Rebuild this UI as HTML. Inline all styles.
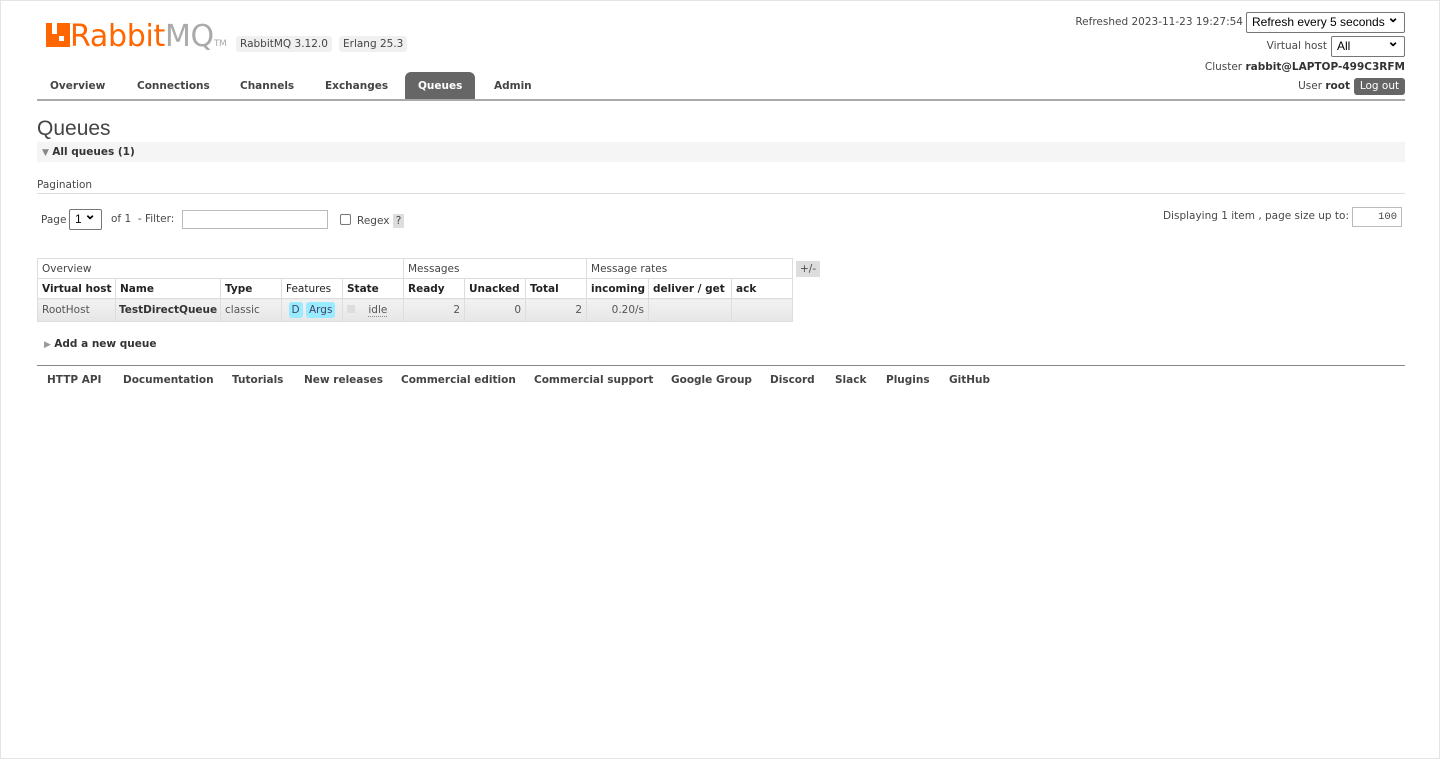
<!DOCTYPE html>
<html><head><meta charset="utf-8"><style>
*{box-sizing:border-box}
body{margin:0;width:1440px;height:759px;background:#fff;font-family:"DejaVu Sans",Verdana,sans-serif;font-size:10.5px;color:#484848;position:relative;overflow:hidden;outline:1px solid #e4e4e4;outline-offset:-1px}
.a{position:absolute;white-space:nowrap}
b{color:#333}
.badge{background:#f0f0f0;border-radius:3px;padding:2px 4px;color:#444}
.nav b{position:absolute;top:80px;color:#444}
.sel{position:absolute;border:1px solid #767676;border-radius:2px;background:#fff;font-size:12px;color:#000;padding:1px 5px;height:21px;line-height:17px;font-family:"Liberation Sans",Arial,sans-serif}
.sel:after{content:"⌄";position:absolute;right:5px;top:-4px;font-size:14px;font-weight:bold}
table{position:absolute;left:37px;top:258px;border-collapse:collapse;font-size:10.5px;table-layout:fixed;width:755px}
td,th{border:1px solid #ddd;padding:0 4px;text-align:left;white-space:nowrap;overflow:hidden}
th{font-weight:bold;color:#222;height:20px}
.h1 th{font-weight:normal;color:#444}
.d td{background:linear-gradient(#f2f2f2,#e6e6e6);height:23px;color:#555}
.r{text-align:right}
.pill{background:#99ebff;border-radius:3px;padding:2px 3px;color:#446}
.foot b{position:absolute;top:374px;color:#444}
</style></head><body>
<div class="a" style="left:46px;top:19px;font-family:'DejaVu Sans',sans-serif;font-size:30px;letter-spacing:-0.3px"><span style="display:inline-block;width:24px;height:24px;background:#f60;vertical-align:-1px;position:relative"><span style="position:absolute;left:6px;top:0;width:5px;height:11px;background:#fff"></span><span style="position:absolute;left:13px;top:13px;width:5px;height:5px;background:#fff"></span></span><span style="color:#f60">Rabbit</span><span style="color:#aaa">MQ</span><span style="font-size:9px;color:#aaa">TM</span></div>
<div class="a" style="left:236px;top:38px"><span class="badge">RabbitMQ 3.12.0</span></div>
<div class="a" style="left:339px;top:38px"><span class="badge">Erlang 25.3</span></div>
<div class="nav">
<b style="left:50px">Overview</b><b style="left:137px">Connections</b><b style="left:240px">Channels</b><b style="left:325px">Exchanges</b>
<div class="a" style="left:405px;top:72px;width:70px;height:28px;background:#666;border-radius:6px 6px 0 0"></div>
<b style="left:418px;color:#fff">Queues</b><b style="left:494px">Admin</b>
</div>
<div class="a" style="left:37px;top:99px;width:1368px;height:2px;background:#aaa"></div>
<div class="a" style="right:197px;top:16px">Refreshed 2023-11-23 19:27:54</div>
<div class="sel" style="left:1246px;top:12px;width:159px">Refresh every 5 seconds</div>
<div class="a" style="right:113px;top:40px">Virtual host</div>
<div class="sel" style="left:1331px;top:36px;width:74px">All</div>
<div class="a" style="right:35px;top:61px">Cluster <b>rabbit@LAPTOP-499C3RFM</b></div>
<div class="a" style="right:90px;top:80px">User <b>root</b></div>
<div class="a" style="left:1354px;top:78px;width:51px;height:17px;background:#666;color:#fff;border-radius:3px;text-align:center;line-height:17px">Log out</div>
<div class="a" style="left:37px;top:117px;font-size:21px;color:#444;font-family:'Liberation Sans',Arial,sans-serif">Queues</div>
<div class="a" style="left:37px;top:142px;width:1368px;height:20px;background:#f5f5f5"></div>
<div class="a" style="left:42px;top:146px"><span style="color:#888;font-size:9px">▼</span> <b>All queues (1)</b></div>
<div class="a" style="left:37px;top:179px">Pagination</div>
<div class="a" style="left:37px;top:193px;width:1368px;height:1px;background:#ddd"></div>
<div class="a" style="left:41px;top:214px">Page</div>
<div class="sel" style="left:69px;top:209px;width:33px;height:21px">1</div>
<div class="a" style="left:111px;top:213px">of 1 &nbsp;- Filter:</div>
<div class="a" style="left:182px;top:210px;width:146px;height:19px;border:1px solid #bbb"></div>
<div class="a" style="left:340px;top:214px;width:11px;height:11px;border:1px solid #777;border-radius:2px"></div>
<div class="a" style="left:357px;top:215px">Regex <span style="background:#ddd;padding:1px 3px">?</span></div>
<div class="a" style="right:91px;top:210px">Displaying 1 item , page size up to:</div>
<div class="a" style="left:1352px;top:207px;width:50px;height:20px;border:1px solid #bbb;text-align:right;padding:3px 4px;font-family:'Liberation Mono',monospace">100</div>
<table>
<colgroup><col style="width:78px"><col style="width:105px"><col style="width:61px"><col style="width:61px"><col style="width:61px"><col style="width:61px"><col style="width:61px"><col style="width:61px"><col style="width:62px"><col style="width:83px"><col style="width:61px"></colgroup>
<tr class="h1"><th colspan="5">Overview</th><th colspan="3">Messages</th><th colspan="3">Message rates</th></tr>
<tr><th>Virtual host</th><th>Name</th><th>Type</th><th style="font-weight:normal">Features</th><th>State</th><th>Ready</th><th>Unacked</th><th>Total</th><th>incoming</th><th>deliver / get</th><th>ack</th></tr>
<tr class="d"><td>RootHost</td><td style="padding:0 3px"><b>TestDirectQueue</b></td><td>classic</td><td style="text-align:center;padding:0"><span class="pill">D</span> <span class="pill">Args</span></td><td><span style="display:inline-block;width:8px;height:8px;background:#ddd"></span> &nbsp; &nbsp;<span style="border-bottom:1px dotted #888">idle</span></td><td class="r">2</td><td class="r">0</td><td class="r">2</td><td class="r">0.20/s</td><td></td><td></td></tr>
</table>
<div class="a" style="left:796px;top:261px;background:#ddd;padding:2px 4px">+/-</div>
<div class="a" style="left:44px;top:338px"><span style="color:#999;font-size:9px">▶</span> <b>Add a new queue</b></div>
<div class="a" style="left:37px;top:365px;width:1368px;height:1px;background:#888"></div>
<div class="foot"><b style="left:47px">HTTP API</b><b style="left:123px">Documentation</b><b style="left:232px">Tutorials</b><b style="left:304px">New releases</b><b style="left:401px">Commercial edition</b><b style="left:534px">Commercial support</b><b style="left:671px">Google Group</b><b style="left:770px">Discord</b><b style="left:835px">Slack</b><b style="left:886px">Plugins</b><b style="left:949px">GitHub</b></div>
</body></html>
